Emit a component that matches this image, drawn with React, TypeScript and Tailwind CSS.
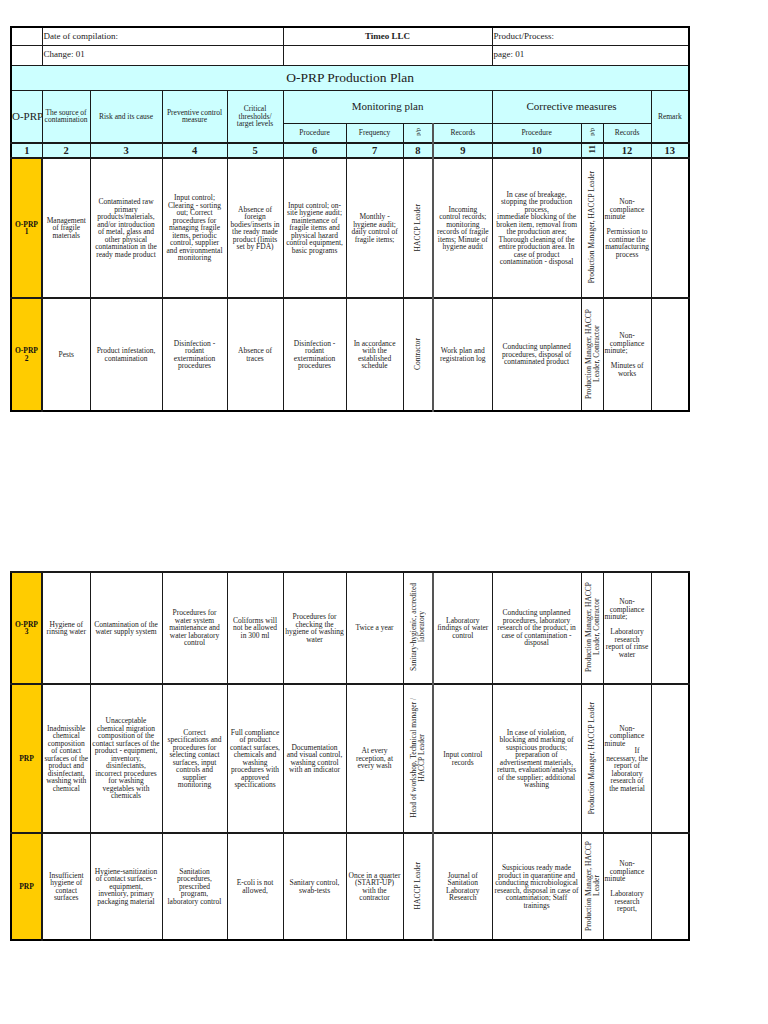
import React from "react";

const widths = [
  "w-[31px]", "w-[48px]", "w-[72px]", "w-[65px]", "w-[56px]", "w-[63px]", "w-[57px]",
  "w-[30px]", "w-[59px]", "w-[89px]", "w-[22px]", "w-[48px]", "w-[38px]",
];

const cell = "border border-[#1a1a1a] px-[1px] text-center align-middle whitespace-nowrap";

const T = ({ lines }: { lines: string[] }) => (
  <>
    {lines.map((l, i) => (
      <div key={i}>{l || "\u00a0"}</div>
    ))}
  </>
);

const V = ({ lines }: { lines: string[] }) => (
  <div className="inline-block rotate-180 text-center [writing-mode:vertical-rl]">
    {lines.map((l, i) => (
      <div key={i}>{l}</div>
    ))}
  </div>
);

const NC = ({ semi, rest, ifLine }: { semi?: boolean; rest: string[]; ifLine?: boolean }) => (
  <>
    <div>Non-</div>
    <div>compliance</div>
    <div className="text-left">{semi ? "minute;" : "minute"}</div>
    {ifLine ? <div className="pr-[10px] text-right">If</div> : <div>{"\u00a0"}</div>}
    <T lines={rest} />
  </>
);

type Row = { label: string[]; h: string; cells: React.ReactNode[] };

const table1: Row[] = [
  {
    label: ["O-PRP", "1"],
    h: "h-[140px]",
    cells: [
      <T lines={["Management", "of fragile", "materials"]} />,
      <T lines={["Contaminated raw", "primary", "products/materials,", "and/or introduction", "of metal, glass and", "other physical", "contamination in the", "ready made product"]} />,
      <T lines={["Input control;", "Clearing - sorting", "out; Correct", "procedures for", "managing fragile", "items, periodic", "control, supplier", "and environmental", "monitoring"]} />,
      <T lines={["Absence of", "foreign", "bodies/inserts in", "the ready made", "product (limits", "set by FDA)"]} />,
      <T lines={["Input control; on-", "site hygiene audit;", "maintenance of", "fragile items and", "physical hazard", "control equipment,", "basic programs"]} />,
      <T lines={["Monthly -", "hygiene audit;", "daily control of", "fragile items;"]} />,
      <V lines={["HACCP Leader"]} />,
      <T lines={["Incoming", "control records;", "monitoring", "records of fragile", "items; Minute of", "hygiene audit"]} />,
      <T lines={["In case of breakage,", "stopping the production", "process,", "immediate blocking of the", "broken item, removal from", "the production area;", "Thorough cleaning of the", "entire production area. In", "case of product", "contamination - disposal"]} />,
      <V lines={["Production Manager,  HACCP Leader"]} />,
      <NC rest={["Permission to", "continue the", "manufacturing", "process"]} />,
    ],
  },
  {
    label: ["O-PRP", "2"],
    h: "h-[113px]",
    cells: [
      <T lines={["Pests"]} />,
      <T lines={["Product infestation,", "contamination"]} />,
      <T lines={["Disinfection -", "rodant", "extermination", "procedures"]} />,
      <T lines={["Absence of", "traces"]} />,
      <T lines={["Disinfection -", "rodant", "extermination", "procedures"]} />,
      <T lines={["In accordance", "with the", "established", "schedule"]} />,
      <V lines={["Contractor"]} />,
      <T lines={["Work plan and", "registration log"]} />,
      <T lines={["Conducting unplanned", "procedures, disposal of", "contaminated product"]} />,
      <V lines={["Production Manager, HACCP", "Leader, Contractor"]} />,
      <NC semi rest={["Minutes of", "works"]} />,
    ],
  },
];

const table2: Row[] = [
  {
    label: ["O-PRP", "3"],
    h: "h-[112px]",
    cells: [
      <T lines={["Hygiene of", "rinsing water"]} />,
      <T lines={["Contamination of the", "water supply system"]} />,
      <T lines={["Procedures for", "water system", "maintenance and", "water laboratory", "control"]} />,
      <T lines={["Coliforms will", "not be allowed", "in 300 ml"]} />,
      <T lines={["Procedures for", "checking the", "hygiene of washing", "water"]} />,
      <T lines={["Twice a year"]} />,
      <V lines={["Sanitary-hygienic, accredited", "laboratory"]} />,
      <T lines={["Laboratory", "findings of water", "control"]} />,
      <T lines={["Conducting unplanned", "procedures, laboratory", "research of the product, in", "case of contamination -", "disposal"]} />,
      <V lines={["Production Manager, HACCP", "Leader, Contractor"]} />,
      <NC semi rest={["Laboratory", "research", "report of rinse", "water"]} />,
    ],
  },
  {
    label: ["PRP"],
    h: "h-[149px]",
    cells: [
      <T lines={["Inadmissible", "chemical", "composition", "of contact", "surfaces of the", "product and", "disinfectant,", "washing with", "chemical"]} />,
      <T lines={["Unacceptable", "chemical migration", "composition of the", "contact surfaces of the", "product - equipment,", "inventory,", "disinfectants,", "incorrect procedures", "for washing", "vegetables with", "chemicals"]} />,
      <T lines={["Correct", "specifications and", "procedures for", "selecting contact", "surfaces, input", "controls and", "supplier", "monitoring"]} />,
      <T lines={["Full compliance", "of product", "contact surfaces,", "chemicals and", "washing", "procedures with", "approved", "specifications"]} />,
      <T lines={["Documentation", "and visual control,", "washing control", "with an indicator"]} />,
      <T lines={["At every", "reception, at", "every wash"]} />,
      <V lines={["Head of workshop, Technical manager /", "HACCP Leader"]} />,
      <T lines={["Input control", "records"]} />,
      <T lines={["In case of violation,", "blocking and marking of", "suspicious products;", "preparation of", "advertisement materials,", "return, evaluation/analysis", "of the supplier; additional", "washing"]} />,
      <V lines={["Production Manager,  HACCP Leader"]} />,
      <NC ifLine rest={["necessary, the", "report of", "laboratory", "research of", "the material"]} />,
    ],
  },
  {
    label: ["PRP"],
    h: "h-[107px]",
    cells: [
      <T lines={["Insufficient", "hygiene of", "contact", "surfaces"]} />,
      <T lines={["Hygiene-sanitization", "of contact surfaces -", "equipment,", "inventory, primary", "packaging material"]} />,
      <T lines={["Sanitation", "procedures,", "prescribed", "program,", "laboratory control"]} />,
      <T lines={["E-coli is not", "allowed,"]} />,
      <T lines={["Sanitary control,", "swab-tests"]} />,
      <T lines={["Once in a quarter", "(START-UP)", "with the", "contractor"]} />,
      <V lines={["HACCP Leader"]} />,
      <T lines={["Journal of", "Sanitation", "Laboratory", "Research"]} />,
      <T lines={["Suspicious ready made", "product in quarantine and", "conducting microbiological", "research, disposal in case of", "contamination; Staff", "trainings"]} />,
      <V lines={["Production Manager, HACCP", "Leader"]} />,
      <NC rest={["Laboratory", "research", "report,"]} />,
    ],
  },
];

const Cols = () => (
  <colgroup>
    {widths.map((w, i) => (
      <col key={i} className={w} />
    ))}
  </colgroup>
);

const Body = ({ rows }: { rows: Row[] }) => (
  <tbody>
    {rows.map((r, ri) => (
      <tr key={ri} className={r.h}>
        <td className={`${cell} border-t-2 border-r-2 bg-[#ffcc00] font-bold text-[#111]`}>
          <T lines={r.label} />
        </td>
        {r.cells.map((c, i) => (
          <td
            key={i}
            className={`${cell} border-t-2 ${i === 7 ? "border-l-2 border-l-[#555]" : ""} ${i === 10 ? "border-l-[#777]" : ""}`}
          >
            {c}
          </td>
        ))}
        <td className={`${cell} border-t-2`} />
      </tr>
    ))}
  </tbody>
);

export default function App() {
  const cyan = "bg-[#ccffff]";
  return (
    <div className="min-h-[1024px] w-[768px] bg-white pl-[10px] pt-[26px] font-['Liberation_Serif',serif] text-[7.5px] leading-[7.5px] text-[#222]">
      <table className="w-[678px] table-fixed border-collapse border-2 border-black">
        <Cols />
        <thead>
          <tr className="h-[18px] text-[9px]">
            <td className={`${cell}`} />
            <td colSpan={4} className={`${cell} text-left`}>Date of compilation:</td>
            <td colSpan={4} className={`${cell} font-bold`}>Timeo LLC</td>
            <td colSpan={4} className={`${cell} text-left`}>Product/Process:</td>
          </tr>
          <tr className="h-[20px] text-[9px]">
            <td className={`${cell}`} />
            <td colSpan={4} className={`${cell} text-left`}>Change: 01</td>
            <td colSpan={4} className={`${cell}`} />
            <td colSpan={4} className={`${cell} text-left`}>page: 01</td>
          </tr>
          <tr className={`h-[25px] ${cyan}`}>
            <td colSpan={13} className={`${cell} text-[13.5px]`}>O-PRP Production Plan</td>
          </tr>
          <tr className={`h-[33px] ${cyan}`}>
            <td rowSpan={2} className={`${cell} overflow-visible pl-0 text-left text-[11px] leading-[11px]`}>O-PRP</td>
            <td rowSpan={2} className={cell}><T lines={["The source of", "contamination"]} /></td>
            <td rowSpan={2} className={cell}>Risk and its cause</td>
            <td rowSpan={2} className={cell}><T lines={["Preventive control", "measure"]} /></td>
            <td rowSpan={2} className={cell}><T lines={["Critical", "thresholds/", "target levels"]} /></td>
            <td colSpan={4} className={`${cell} text-[11px] leading-[11px]`}>Monitoring plan</td>
            <td colSpan={3} className={`${cell} text-[11px] leading-[11px]`}>Corrective measures</td>
            <td rowSpan={2} className={cell}>Remark</td>
          </tr>
          <tr className={`h-[20px] ${cyan}`}>
            <td className={cell}>Procedure</td>
            <td className={cell}>Frequency</td>
            <td className={`${cell} text-[6px] leading-[6px]`}><V lines={["p/p"]} /></td>
            <td className={`${cell} border-l-2 border-l-[#555]`}>Records</td>
            <td className={cell}>Procedure</td>
            <td className={`${cell} text-[6px] leading-[6px]`}><V lines={["p/p"]} /></td>
            <td className={cell}>Records</td>
          </tr>
          <tr className={`h-[15px] ${cyan} text-[10.5px] leading-[10px] font-semibold`}>
            {["1", "2", "3", "4", "5", "6", "7", "8", "9", "10"].map((n) => (
              <td key={n} className={`${cell} border-t-2 ${n === "9" ? "border-l-2 border-l-[#555]" : ""}`}>{n}</td>
            ))}
            <td className={`${cell} border-t-2 text-[9px] leading-[9px]`}><V lines={["11"]} /></td>
            <td className={`${cell} border-t-2`}>12</td>
            <td className={`${cell} border-t-2`}>13</td>
          </tr>
        </thead>
        <Body rows={table1} />
      </table>

      <table className="mt-[159px] w-[678px] table-fixed border-collapse border-2 border-black">
        <Cols />
        <Body rows={table2} />
      </table>
    </div>
  );
}
